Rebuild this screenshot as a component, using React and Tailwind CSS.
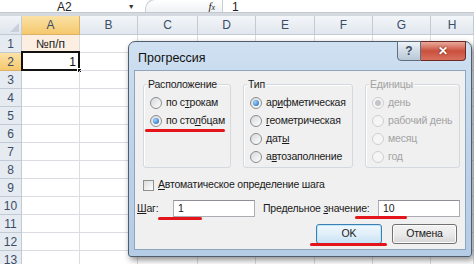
import React from "react";

const COLS = [
  { w: "w-[58px]", l: "A" },
  { w: "w-[58px]", l: "B" },
  { w: "w-[60px]", l: "C" },
  { w: "w-[58px]", l: "D" },
  { w: "w-[59px]", l: "E" },
  { w: "w-[58px]", l: "F" },
  { w: "w-[58px]", l: "G" },
  { w: "w-[43px]", l: "H" },
];

function Radio({ checked, disabled, children }) {
  return (
    <div className={`flex items-center gap-[4px] h-[18px] ${disabled ? "text-[#a3a3a3]" : "text-[#1a1a1a]"}`}>
      <span
        className={`w-[12px] h-[12px] rounded-full border flex items-center justify-center shrink-0 ${
          disabled
            ? "border-[#cfcfcf] bg-[#f5f5f5]"
            : "border-[#8a8c8e] bg-gradient-to-br from-[#d6d8da] to-[#ffffff]"
        }`}
      >
        {checked && (
          <span
            className={`w-[6px] h-[6px] rounded-full ${
              disabled
                ? "bg-[#c2c6cc]"
                : "bg-[radial-gradient(circle_at_35%_35%,#9ad6ff,#1c5cb4)]"
            }`}
          />
        )}
      </span>
      <span className="whitespace-nowrap">{children}</span>
    </div>
  );
}

function Group({ title, w, disabled, children }) {
  return (
    <div className={`${w} h-[84px] border border-[#d3d9de] rounded-[3px] shadow-[inset_1px_1px_0_#ffffff]`}>
      <span
        className={`block w-fit -mt-[8px] ml-[3px] px-[1px] leading-[14px] bg-[#f0f0f0] ${
          disabled ? "text-[#a3a3a3]" : "text-[#1a1a1a]"
        }`}
      >
        {title}
      </span>
      <div className="pt-[3px] pl-[6px]">{children}</div>
    </div>
  );
}

export default function App() {
  const rows = Array.from({ length: 13 }, (_, i) => i + 1);
  return (
    <div className="relative w-[474px] h-[264px] overflow-hidden bg-white font-['Liberation_Sans',Arial,sans-serif]">
      {/* formula bar */}
      <div className="h-[12px] flex items-end text-[12px] leading-[12px] text-[#222] overflow-hidden">
        <div className="w-[145px] flex items-end shrink-0">
          <span className="ml-[57px] -mb-[1px]">A2</span>
          <span className="ml-[56px] text-[7px] leading-[8px] mb-[1px] text-[#333]">▼</span>
        </div>
        <div className="w-[78px] h-[14px] -mb-[1px] rounded-tl-[10px] border-l border-t border-[#c9ced6] bg-gradient-to-b from-[#ffffff] to-[#eef0f3] flex items-end justify-end pr-[7px] border-r">
          <span className="italic font-['Liberation_Serif',serif] text-[11px] -mb-[1px]">f<span className="text-[8px]">x</span></span>
        </div>
        <span className="ml-[9px] -mb-[1px]">1</span>
      </div>
      <div className="h-[4px] bg-[#d5dae1] border-t border-[#c3c9d1]" />
      {/* column headers */}
      <div className="flex h-[19px] text-[12px] text-[#3a4d66]">
        <div className="w-[22px] shrink-0 bg-gradient-to-b from-[#f1f4f8] to-[#dfe5ec] border-r border-b border-[#c2cad4] relative">
          <span className="absolute right-[2px] bottom-[2px] w-0 h-0 border-l-[9px] border-l-transparent border-b-[9px] border-b-[#c9d0d9]" />
        </div>
        {COLS.map((c) => (
          <div
            key={c.l}
            className={`${c.w} shrink-0 flex items-center justify-center border-r border-b ${
              c.l === "A"
                ? "bg-gradient-to-b from-[#fbe2a6] to-[#f5c86c] border-[#d9b267]"
                : "bg-gradient-to-b from-[#f3f6f9] to-[#e1e7ee] border-[#c2cad4]"
            }`}
          >
            {c.l}
          </div>
        ))}
      </div>
      {/* rows */}
      {rows.map((r) => (
        <div key={r} className="flex h-[18px] text-[12px]">
          <div
            className={`w-[22px] shrink-0 flex items-center justify-center border-r border-b text-[#3a4d66] ${
              r === 2
                ? "bg-gradient-to-b from-[#fbe2a6] to-[#f5c86c] border-[#d9b267]"
                : "bg-[#e6ebf1] border-[#c2cad4]"
            }`}
          >
            {r}
          </div>
          {COLS.map((c) => (
            <div
              key={c.l}
              className={`${c.w} shrink-0 border-r border-b border-[#dadde1] relative flex items-center ${
                r === 1 && c.l === "A" ? "bg-[#fdeee2] justify-center" : "justify-end"
              }`}
            >
              {r === 1 && c.l === "A" && <span className="text-[#222]">№п/п</span>}
              {r === 2 && c.l === "A" && (
                <>
                  <span className="pr-[3px] text-[#111]">1</span>
                  <span className="absolute -left-[1px] -top-[2px] -right-[1px] -bottom-[1px] border-2 border-[#111]" />
                  <span className="absolute -right-[3px] -bottom-[3px] w-[5px] h-[5px] bg-[#111] border border-white" />
                </>
              )}
            </div>
          ))}
        </div>
      ))}

      {/* dialog */}
      <div className="absolute left-[128px] top-[41px] w-[344px] h-[216px] rounded-t-[7px] rounded-b-[3px] border border-[#4f5d6d] bg-gradient-to-b from-[#cfe0f1] via-[#bcd3ea] to-[#b4cce5] shadow-[2px_3px_6px_rgba(0,0,0,0.45)] flex flex-col text-[10.5px] tracking-[-0.2px]">
        <div className="h-[28px] flex items-start tracking-normal">
          <span className="ml-[9px] mt-[9px] text-[12.5px] text-[#111] leading-[14px]">Прогрессия</span>
          <div className="ml-auto mr-[5px] flex -mt-[1px]">
            <div className="w-[24px] h-[20px] rounded-bl-[4px] border border-[#5f6e80] bg-gradient-to-b from-[#eef3f8] via-[#d0dbe6] to-[#b9c7d6] flex items-center justify-center text-[#3c4a5c] font-bold text-[12px] leading-[12px]">
              ?
            </div>
            <div className="w-[45px] h-[20px] rounded-br-[4px] border border-l-0 border-[#6e2a22] bg-gradient-to-b from-[#e9a99c] via-[#c9503d] to-[#d8705e] flex items-center justify-center text-white font-bold text-[12px] leading-[12px] [text-shadow:0_0_2px_#5a1a10]">
              ✕
            </div>
          </div>
        </div>
        <div className="mx-[5px] h-[180px] bg-[#f0f0f0] border border-[#8ea5bd] flex flex-col text-[#1a1a1a]">
          <div className="flex gap-[12px] mt-[13px] ml-[8px]">
            <Group title="Расположение" w="w-[88px]">
              <Radio>по с<u>т</u>рокам</Radio>
              <Radio checked>по сто<u>л</u>бцам</Radio>
            </Group>
            <Group title="Тип" w="w-[110px]">
              <Radio checked>ар<u>и</u>фметическая</Radio>
              <Radio><u>г</u>еометрическая</Radio>
              <Radio>дат<u>ы</u></Radio>
              <Radio>а<u>в</u>тозаполнение</Radio>
            </Group>
            <Group title="Единицы" w="w-[95px]" disabled>
              <Radio checked disabled>день</Radio>
              <Radio disabled>рабочий день</Radio>
              <Radio disabled>месяц</Radio>
              <Radio disabled>год</Radio>
            </Group>
          </div>
          <div className="flex items-center gap-[4px] mt-[11px] ml-[8px] h-[12px]">
            <span className="w-[11px] h-[11px] border border-[#8e8f8f] bg-gradient-to-br from-[#dcdcdc] to-[#ffffff] shrink-0" />
            <span className="whitespace-nowrap"><u>А</u>втоматическое определение шага</span>
          </div>
          <div className="flex items-center mt-[9px] ml-[2px] h-[17px]">
            <span className="w-[36px] whitespace-nowrap"><u>Ш</u>аг:</span>
            <div className="w-[82px] h-[17px] bg-white border border-[#abadb3] border-t-[#8c8f96] flex items-center pl-[4px]">1</div>
            <span className="ml-[8px] w-[115px] whitespace-nowrap">Предельное <u>з</u>начение:</span>
            <div className="w-[82px] h-[17px] bg-white border border-[#abadb3] border-t-[#8c8f96] flex items-center pl-[4px]">10</div>
          </div>
          <div className="flex justify-end gap-[10px] mt-[7px] mr-[8px]">
            <div className="w-[66px] h-[20px] rounded-[3px] border border-[#3c7fb1] shadow-[inset_0_0_0_1px_#bfe6fb] bg-gradient-to-b from-[#f0f8fd] via-[#e1eff9] to-[#c7e2f4] flex items-center justify-center">
              OK
            </div>
            <div className="w-[65px] h-[20px] rounded-[3px] border border-[#707070] shadow-[inset_0_0_0_1px_#fcfcfc] bg-gradient-to-b from-[#f2f2f2] via-[#ebebeb] to-[#d6d6d6] flex items-center justify-center">
              Отмена
            </div>
          </div>
        </div>
      </div>

      {/* red annotation lines */}
      <div className="absolute left-[145px] top-[129px] w-[80px] h-[3px] bg-[#e3151b] rounded-full" />
      <div className="absolute left-[158px] top-[217px] w-[44px] h-[3px] bg-[#e3151b] rounded-full" />
      <div className="absolute left-[355px] top-[216px] w-[52px] h-[3px] bg-[#e3151b] rounded-full" />
      <div className="absolute left-[310px] top-[243px] w-[77px] h-[3px] bg-[#e3151b] rounded-full" />
    </div>
  );
}
